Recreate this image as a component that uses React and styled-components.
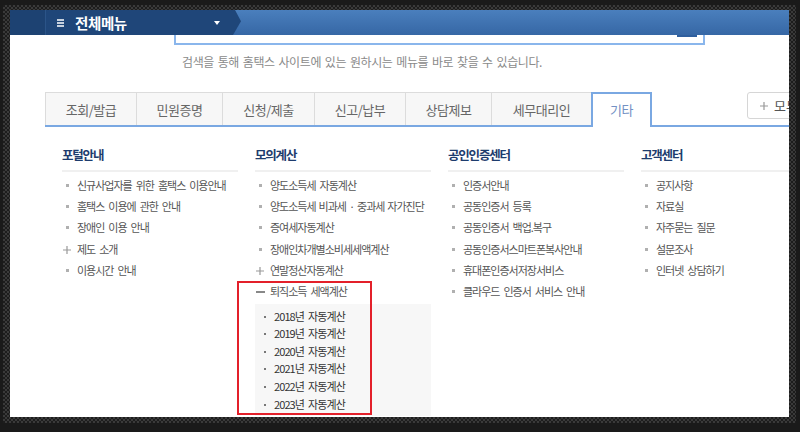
import React from "react";
import styled, { createGlobalStyle } from "styled-components";

const GlobalStyle = createGlobalStyle`
  html, body {
    margin: 0;
    padding: 0;
    background: #1a1a1a;
  }
  body {
    font-family: "Noto Sans CJK KR", "Noto Sans", sans-serif;
  }
  ul {
    list-style: none;
    margin: 0;
    padding: 0;
  }
`;

const Frame = styled.div`
  margin: 5px 0 0 3px;
  width: 779px;
  padding: 5px 7px 6px 7px;
  background: repeating-conic-gradient(#3a3a3a 0 25%, #1d1d1d 0 50%) 0 0 / 4px 4px;
`;

const Page = styled.div`
  position: relative;
  width: 779px;
  height: 407px;
  background: #fff;
  overflow: hidden;
`;

const Header = styled.div`
  display: flex;
  height: 25px;
  background: linear-gradient(#4a7fbd, #3667a5);
`;

const MenuBlock = styled.div`
  display: flex;
  align-items: center;
  width: 231px;
  background: #1f4679;
  clip-path: polygon(0 0, 225px 0, 231px 45%, 223px 100%, 0 100%);
`;

const IconCell = styled.div`
  width: 35px;
  height: 100%;
  border-right: 1px solid #2b5488;
  background: #1d4272;
`;

const MenuTitle = styled.div`
  display: flex;
  align-items: center;
  gap: 11px;
  margin-left: 11px;
  flex: 1;
  color: #fff;
  font-size: 14.5px;
  font-weight: 700;
  letter-spacing: -0.4px;
`;

const Caret = styled.span`
  margin-left: auto;
  margin-right: 21px;
  width: 0;
  height: 0;
  border-left: 3.5px solid transparent;
  border-right: 3.5px solid transparent;
  border-top: 4px solid #fff;
`;

const SearchBox = styled.div`
  display: flex;
  justify-content: flex-end;
  margin-left: 164px;
  width: 527px;
  height: 8px;
  border: 2px solid #8ab6ec;
  border-top: none;
`;

const SearchButton = styled.div`
  width: 20px;
  height: 2px;
  margin-right: 6px;
  background: #2f5f9e;
`;

const Helper = styled.p`
  margin: 9px 0 0 172px;
  line-height: 16px;
  font-size: 12px;
  letter-spacing: -0.4px;
  word-spacing: 1.5px;
  color: #8a8a8a;
`;

const TabRow = styled.div`
  display: flex;
  align-items: flex-start;
  margin: 22px 0 0 35px;
`;

const Tabs = styled.div`
  display: flex;
  border-bottom: 2px solid #7aa8e2;
  flex: 0 0 auto;
`;

const Tab = styled.div`
  box-sizing: border-box;
  display: flex;
  align-items: center;
  justify-content: center;
  width: ${(p) => p.w}px;
  height: ${(p) => (p.active ? 35 : 33)}px;
  margin-bottom: ${(p) => (p.active ? -2 : 0)}px;
  font-size: 13px;
  letter-spacing: -0.5px;
  color: ${(p) => (p.active ? "#7391c4" : "#666")};
  background: ${(p) => (p.active ? "#fff" : "#f7f7f7")};
  border: ${(p) => (p.active ? "2px solid #7aa8e2" : "1px solid #dcdcdc")};
  border-bottom: none;
  border-right: ${(p) => (p.active ? "2px solid #7aa8e2" : "none")};
  padding-bottom: ${(p) => (p.active ? 2 : 0)}px;
`;

const TabLine = styled.div`
  flex: 1;
  align-self: stretch;
  border-bottom: 2px solid #7aa8e2;
`;

const ExpandButton = styled.button`
  display: flex;
  align-items: center;
  gap: 6px;
  margin-left: 95px;
  height: 27px;
  padding: 0 12px;
  white-space: nowrap;
  background: #fff;
  border: 1px solid #d6d6d6;
  border-radius: 3px;
  font-family: inherit;
  font-size: 13px;
  color: #555;
`;

const Columns = styled.div`
  display: grid;
  grid-template-columns: repeat(4, 176px);
  column-gap: 17px;
  margin: 19px 0 0 52px;
`;

const Column = styled.div`
  min-width: 0;
`;

const Heading = styled.h3`
  margin: 0;
  padding-bottom: 6px;
  line-height: 18px;
  font-size: 12.5px;
  font-weight: 700;
  letter-spacing: -1.2px;
  color: #1d3c6d;
  border-bottom: 2px solid #f0f0f0;
`;

const List = styled.ul`
  margin-top: 3px !important;
`;

const Item = styled.li`
  position: relative;
  height: 21.2px;
  line-height: 21px;
  padding-left: 15px;
  font-size: 11px;
  letter-spacing: -1px;
  word-spacing: ${(p) => (p.tight ? 1.5 : 2.5)}px;
  color: #555;
  white-space: nowrap;

  &::before {
    content: "";
    display: ${(p) => (p.marker ? "none" : "block")};
    position: absolute;
    left: 4px;
    top: 9px;
    width: 3px;
    height: 3px;
    background: #b0b0b0;
  }
`;

const Marker = styled.span`
  position: absolute;
  left: 1px;
  top: 7px;
  display: flex;
`;

const Group = styled.li`
  position: relative;
`;

const SubBox = styled.ul`
  margin-top: 1.5px !important;
  padding: 4px 0 0 0 !important;
  height: 108px;
  background: #f7f7f7;
`;

const SubItem = styled.li`
  position: relative;
  height: 17.6px;
  line-height: 17.6px;
  padding-left: 19px;
  font-size: 11px;
  letter-spacing: -0.9px;
  word-spacing: 2.5px;
  color: #333;

  &::before {
    content: "";
    position: absolute;
    left: 9px;
    top: 8px;
    width: 2px;
    height: 2px;
    background: #777;
  }
`;

const Highlight = styled.div`
  position: absolute;
  top: 0;
  left: -18px;
  width: 135px;
  height: 134px;
  box-sizing: border-box;
  border: 2px solid #e3202a;
  pointer-events: none;
`;

const Plus = () => (
  <svg width="8" height="8" viewBox="0 0 8 8">
    <path d="M4 0v8M0 4h8" stroke="#999" strokeWidth="1.2" />
  </svg>
);

const Minus = () => (
  <svg width="9" height="8" viewBox="0 0 9 8">
    <path d="M0 4h9" stroke="#555" strokeWidth="1.4" />
  </svg>
);

const Hamburger = () => (
  <svg width="7" height="8" viewBox="0 0 7 8">
    <path d="M0 1h7M0 4h7M0 7h7" stroke="#fff" strokeWidth="1.3" />
  </svg>
);

const tabs = [
  ["조회/발급", 91],
  ["민원증명", 86],
  ["신청/제출", 92],
  ["신고/납부", 91],
  ["상담제보", 86],
  ["세무대리인", 100],
  ["기타", 61, true],
];

const years = ["2018", "2019", "2020", "2021", "2022", "2023"];

const App = () => {
  return (
    <>
      <GlobalStyle />
      <Frame>
        <Page>
          <Header>
            <MenuBlock>
              <IconCell />
              <MenuTitle>
                <Hamburger />
                전체메뉴
                <Caret />
              </MenuTitle>
            </MenuBlock>
          </Header>
          <SearchBox>
            <SearchButton />
          </SearchBox>
          <Helper>
            검색을 통해 홈택스 사이트에 있는 원하시는 메뉴를 바로 찾을 수 있습니다.
          </Helper>

          <TabRow>
            <Tabs>
              {tabs.map(([label, w, active]) => (
                <Tab key={label} w={w} active={active}>
                  {label}
                </Tab>
              ))}
            </Tabs>
            <TabLine>
              <ExpandButton>
                <Plus />
                모두 펼치기
              </ExpandButton>
            </TabLine>
          </TabRow>

          <Columns>
            <Column>
              <Heading>포털안내</Heading>
              <List>
                <Item>신규사업자를 위한 홈택스 이용안내</Item>
                <Item>홈택스 이용에 관한 안내</Item>
                <Item>장애인 이용 안내</Item>
                <Item marker>
                  <Marker>
                    <Plus />
                  </Marker>
                  제도 소개
                </Item>
                <Item>이용시간 안내</Item>
              </List>
            </Column>

            <Column>
              <Heading>모의계산</Heading>
              <List>
                <Item>양도소득세 자동계산</Item>
                <Item tight>양도소득세 비과세 · 중과세 자가진단</Item>
                <Item>증여세자동계산</Item>
                <Item>장애인차개별소비세세액계산</Item>
                <Item marker>
                  <Marker>
                    <Plus />
                  </Marker>
                  연말정산자동계산
                </Item>
                <Group>
                  <Item marker>
                    <Marker>
                      <Minus />
                    </Marker>
                    퇴직소득 세액계산
                  </Item>
                  <SubBox>
                    {years.map((y) => (
                      <SubItem key={y}>{y}년 자동계산</SubItem>
                    ))}
                  </SubBox>
                  <Highlight />
                </Group>
              </List>
            </Column>

            <Column>
              <Heading>공인인증센터</Heading>
              <List>
                <Item>인증서안내</Item>
                <Item>공동인증서 등록</Item>
                <Item>공동인증서 백업.복구</Item>
                <Item>공동인증서스마트폰복사안내</Item>
                <Item>휴대폰인증서저장서비스</Item>
                <Item>클라우드 인증서 서비스 안내</Item>
              </List>
            </Column>

            <Column>
              <Heading>고객센터</Heading>
              <List>
                <Item>공지사항</Item>
                <Item>자료실</Item>
                <Item>자주묻는 질문</Item>
                <Item>설문조사</Item>
                <Item>인터넷 상담하기</Item>
              </List>
            </Column>
          </Columns>
        </Page>
      </Frame>
    </>
  );
};

export default App;
